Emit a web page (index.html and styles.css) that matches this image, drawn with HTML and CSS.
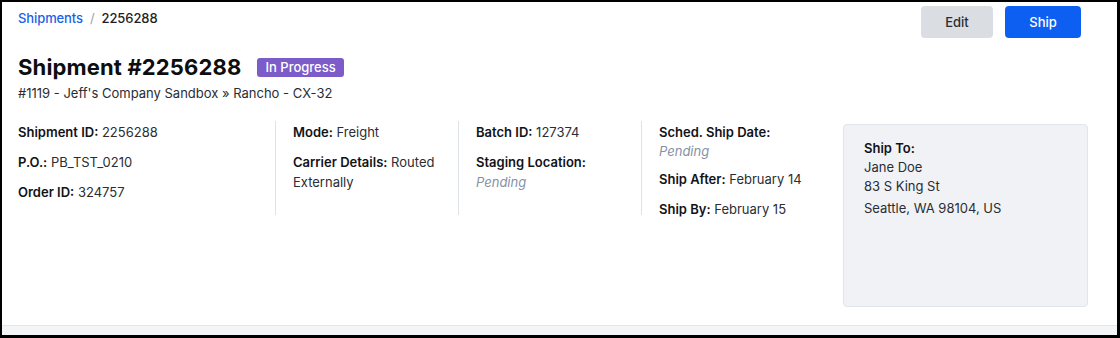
FILE: index.html
```html
<!DOCTYPE html>
<html>
<head>
<meta charset="utf-8">
<link rel="stylesheet" href="styles.css">
</head>
<body>
<div class="frame">
  <div class="page">
    <div class="topbar">
      <nav class="crumbs">
        <a class="crumb-link" href="#">Shipments</a>
        <span class="crumb-sep">/</span>
        <span class="crumb-current">2256288</span>
      </nav>
      <div class="actions">
        <button class="btn btn-edit">Edit</button>
        <button class="btn btn-ship">Ship</button>
      </div>
    </div>
    <div class="title-row">
      <h1 class="title">Shipment #2256288</h1>
      <span class="badge">In Progress</span>
    </div>
    <div class="subtitle">#1119 - Jeff's Company Sandbox » Rancho - CX-32</div>

    <div class="details">
      <div class="col col-first">
        <div class="field"><span class="label">Shipment ID:</span> <span>2256288</span></div>
        <div class="field"><span class="label">P.O.:</span> <span>PB_TST_0210</span></div>
        <div class="field"><span class="label">Order ID:</span> <span>324757</span></div>
      </div>
      <div class="col">
        <div class="field"><span class="label">Mode:</span> <span>Freight</span></div>
        <div class="field"><span class="label">Carrier Details:</span> Routed Externally</div>
      </div>
      <div class="col">
        <div class="field"><span class="label">Batch ID:</span> <span>127374</span></div>
        <div class="field"><div class="label">Staging Location:</div><div class="pending">Pending</div></div>
      </div>
      <div class="col">
        <div class="field field-tight"><div class="label">Sched. Ship Date:</div><div class="pending">Pending</div></div>
        <div class="field"><span class="label">Ship After:</span> <span>February 14</span></div>
        <div class="field"><span class="label">Ship By:</span> <span>February 15</span></div>
      </div>
      <div class="shipto">
        <div class="label">Ship To:</div>
        <div>Jane Doe</div>
        <div>83 S King St</div>
        <div class="city">Seattle, WA 98104, US</div>
      </div>
    </div>
  </div>
  <div class="footer-strip"></div>
</div>
</body>
</html>
```

FILE: styles.css
```css
* { box-sizing: border-box; }
html, body { margin: 0; padding: 0; background: #fff; }
body {
  font-family: Inter, "Noto Sans", sans-serif;
  font-size: 13px;
  color: #1d1f24;
  width: 1120px;
  height: 338px;
  overflow: hidden;
}
.frame {
  width: 1120px;
  height: 338px;
  border-style: solid;
  border-color: #000;
  border-width: 2px 3px 3px 2px;
  display: flex;
  flex-direction: column;
}
.page {
  flex: 1;
  padding: 4px 29px 0 16px;
  border-bottom: 1px solid #e3e6eb;
}
.footer-strip {
  height: 9px;
  background: #f4f5f7;
}
.topbar {
  display: flex;
  justify-content: space-between;
  align-items: flex-start;
}
.crumbs {
  display: flex;
  gap: 7px;
  line-height: 20px;
  padding-top: 2px;
  font-weight: 500;
  letter-spacing: -0.1px;
}
.crumb-link { color: #1a5fe6; text-decoration: none; }
.crumb-sep { color: #9aa1ad; font-weight: 400; }
.crumb-current { color: #1d1f24; }
.actions {
  display: flex;
  gap: 12px;
  margin-right: 7px;
}
.btn {
  font-family: inherit;
  font-size: 13px;
  font-weight: 500;
  height: 32px;
  border: none;
  border-radius: 4px;
  padding: 0;
}
.btn-edit { width: 72px; background: #dadde2; color: #2a2d33; }
.btn-ship { width: 76px; background: #0d5ff2; color: #fff; }
.title-row {
  display: flex;
  align-items: center;
  gap: 16px;
  margin-top: 15px;
}
.title {
  margin: 0;
  font-size: 22px;
  font-weight: 700;
  line-height: 28px;
  letter-spacing: 0.15px;
  color: #0d0e10;
}
.badge {
  background: #7c5cc8;
  color: #fff;
  font-size: 13px;
  font-weight: 500;
  line-height: 19px;
  padding: 0 8px;
  border-radius: 3px;
}
.subtitle {
  margin-top: 2px;
  line-height: 20px;
  color: #2a2d33;
}
.details {
  display: flex;
  align-items: flex-start;
  margin-top: 18px;
}
.col {
  width: 183px;
  height: 94px;
  padding: 1px 14px 0 17px;
  border-left: 1px solid #dde1e8;
}
.col-first {
  width: 257px;
  padding-left: 0;
  border-left: none;
}
.field {
  line-height: 20px;
  margin-bottom: 10px;
  color: #2a2d33;
}
.field-tight { margin-bottom: 8px; }
.col-first .field, .col:nth-child(2) .field:first-child, .col:nth-child(3) .field:first-child { margin-bottom: 10px; }
.col .field-tight .pending { margin-top: -1px; }
.label { font-weight: 600; color: #111317; }
.pending {
  font-style: italic;
  color: #8590a6;
}
.shipto {
  margin-left: 19px;
  margin-top: 3px;
  width: 245px;
  height: 183px;
  background: #f0f2f6;
  border: 1px solid #e1e4ea;
  border-radius: 4px;
  padding: 14px 20px;
  line-height: 19px;
  color: #2a2d33;
}
.shipto .city { margin-top: 3px; }
```
